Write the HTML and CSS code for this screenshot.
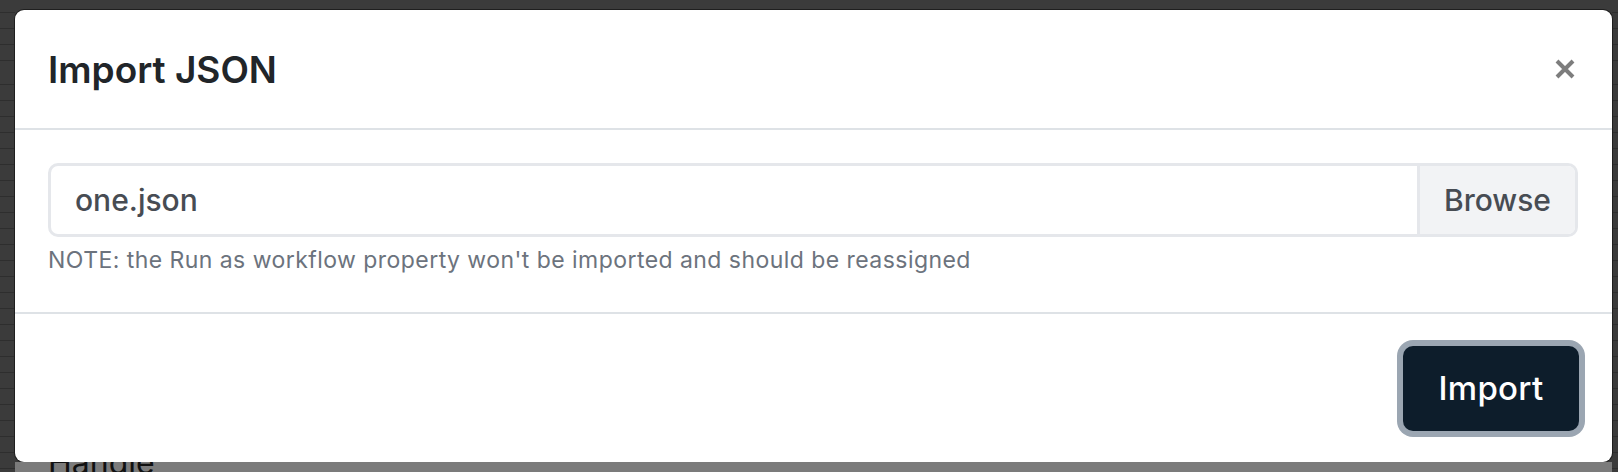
FILE: index.html
```html
<!DOCTYPE html>
<html lang="en">
<head>
<meta charset="utf-8">
<title>Import JSON</title>
<link rel="stylesheet" href="styles.css">
</head>
<body>
<div class="screen">
  <div class="modal" role="dialog" aria-labelledby="modal-title">
    <div class="modal-header">
      <h5 class="modal-title" id="modal-title">Import JSON</h5>
      <button class="btn-close" type="button" aria-label="Close">
        <svg width="20" height="20" viewBox="0 0 20 20" aria-hidden="true">
          <path d="M2 2 L18 18 M18 2 L2 18" stroke="#7d7d7d" stroke-width="4" stroke-linecap="butt" fill="none"/>
        </svg>
      </button>
    </div>
    <div class="modal-body">
      <div class="input-group">
        <div class="file-name">one.json</div>
        <div class="file-browse">Browse</div>
      </div>
      <div class="form-note">NOTE: the Run as workflow property won't be imported and should be reassigned</div>
    </div>
    <div class="modal-footer">
      <button class="btn-import" type="button">Import</button>
    </div>
  </div>
  <div class="under">
    <span class="under-label">Handle</span>
  </div>
</div>
</body>
</html>
```

FILE: styles.css
```css
* { box-sizing: border-box; }

html, body {
  margin: 0;
  padding: 0;
}

body {
  width: 1618px;
  height: 472px;
  overflow: hidden;
  background-color: #3b3b3b;
  font-family: "Inter", "Open Sans", sans-serif;
}

.screen {
  width: 1618px;
  height: 472px;
  display: flex;
  flex-direction: column;
  padding-top: 10px;
  background-image:
    linear-gradient(to right, transparent 0, transparent 15px, #3b3b3b 15px, #3b3b3b 1612px, transparent 1612px),
    repeating-linear-gradient(to bottom, transparent 0, transparent 15px, #2e2e2e 15px, #2e2e2e 16px);
  background-position: 0 0, 0 69px;
  background-repeat: no-repeat, repeat;
}

.modal {
  margin-left: 15px;
  width: 1597px;
  height: 452px;
  background: #ffffff;
  border-radius: 9px;
  box-shadow: 0 0 0 1px #1f1f1f;
  display: flex;
  flex-direction: column;
  flex-shrink: 0;
}

.modal-header {
  height: 120px;
  border-bottom: 2px solid #dee2e6;
  display: flex;
  align-items: center;
  justify-content: space-between;
  padding: 0 37px 0 33px;
}

.modal-title {
  margin: 0;
  font-size: 37px;
  font-weight: 600;
  color: #212529;
  letter-spacing: 0;
  line-height: 1;
}

.btn-close {
  border: 0;
  background: transparent;
  padding: 0;
  width: 20px;
  height: 20px;
  display: flex;
}

.modal-body {
  height: 184px;
  border-bottom: 2px solid #dee2e6;
  padding: 33px 34px 0 33px;
}

.input-group {
  height: 74px;
  display: flex;
  border: 3px solid #e5e7eb;
  border-radius: 10px;
  overflow: hidden;
}

.file-name {
  flex: 1;
  display: flex;
  align-items: center;
  padding-left: 24px;
  font-size: 30px;
  font-weight: 500;
  color: #474c53;
}

.file-browse {
  width: 158px;
  display: flex;
  align-items: center;
  justify-content: center;
  background: #f2f3f5;
  border-left: 3px solid #e5e7eb;
  font-size: 30px;
  font-weight: 500;
  color: #474c53;
}

.form-note {
  margin-top: 9px;
  font-size: 23px;
  letter-spacing: 0.45px;
  color: #6c737d;
  line-height: 29px;
}

.modal-footer {
  flex: 1;
  display: flex;
  align-items: center;
  justify-content: flex-end;
  padding: 0 33px 0 0;
}

.btn-import {
  width: 176px;
  height: 85px;
  border: 0;
  border-radius: 10px;
  background: #0d1d2b;
  color: #ffffff;
  font-family: inherit;
  font-size: 33px;
  font-weight: 500;
  letter-spacing: 0.3px;
  box-shadow: 0 0 0 6px #9ba6b2;
  cursor: pointer;
}

.under {
  margin-left: 15px;
  width: 1597px;
  flex: 1;
  background: #7b7b7b;
  overflow: hidden;
  padding-left: 33px;
}

.under-label {
  display: block;
  margin-top: -18px;
  font-size: 32px;
  color: #111111;
  line-height: 38px;
}
```
